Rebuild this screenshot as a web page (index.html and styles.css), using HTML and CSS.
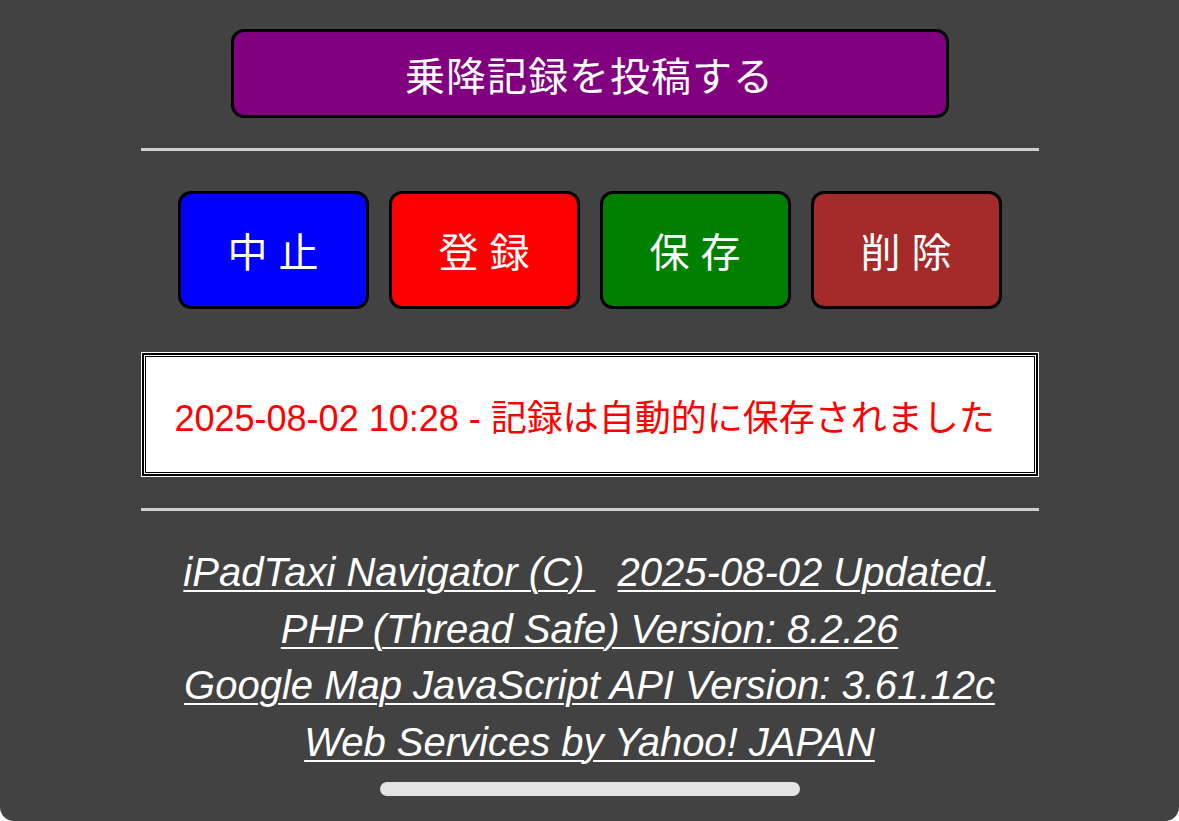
FILE: index.html
```html
<!DOCTYPE html>
<html lang="ja">
<head>
<meta charset="utf-8">
<title>乗降記録</title>
<link rel="stylesheet" href="styles.css">
</head>
<body>
<div class="screen">
  <button class="post">乗降記録を投稿する</button>
  <div class="rule"></div>
  <div class="actions">
    <button class="act cancel">中 止</button>
    <button class="act register">登 録</button>
    <button class="act save">保 存</button>
    <button class="act delete">削 除</button>
  </div>
  <div class="notice">
    <div class="notice-frame">
      <div class="notice-cell">2025-08-02 10:28 - 記録は自動的に保存されました</div>
    </div>
  </div>
  <div class="rule"></div>
  <div class="footer">
    <p><a href="#">iPadTaxi Navigator (C) </a>&nbsp; <a href="#">2025-08-02 Updated.</a></p>
    <p><a href="#">PHP (Thread Safe) Version: 8.2.26</a></p>
    <p><a href="#">Google Map JavaScript API Version: 3.61.12c</a></p>
    <p><a href="#">Web Services by Yahoo! JAPAN</a></p>
  </div>
  <div class="home-indicator"></div>
</div>
</body>
</html>
```

FILE: styles.css
```css
html, body {
  margin: 0;
  padding: 0;
  background: #ffffff;
}

body {
  font-family: "Liberation Sans", "Noto Sans CJK JP", sans-serif;
}

.screen {
  width: 1179px;
  height: 821px;
  box-sizing: border-box;
  background: #424242;
  border-radius: 0 0 14px 14px;
  padding-top: 29px;
  display: flex;
  flex-direction: column;
  align-items: center;
  overflow: hidden;
}

.post {
  width: 718px;
  height: 89px;
  box-sizing: border-box;
  background: #800080;
  border: 3px solid #000;
  border-radius: 13px;
  color: #fff;
  font-family: "Liberation Sans", "Noto Sans CJK JP", sans-serif;
  font-size: 40px;
  letter-spacing: 1px;
  padding: 0;
  margin: 0;
}

.rule {
  width: 898px;
  height: 3px;
  background: #cfcfcf;
  margin-top: 30px;
  flex-shrink: 0;
}

.actions {
  display: flex;
  gap: 20px;
  margin-top: 40px;
}

.act {
  width: 191px;
  height: 118px;
  box-sizing: border-box;
  border: 3px solid #000;
  border-radius: 13px;
  color: #fff;
  font-family: "Liberation Sans", "Noto Sans CJK JP", sans-serif;
  font-size: 40px;
  padding: 0;
  margin: 0;
}

.cancel { background: #0000ff; }
.register { background: #ff0000; }
.save { background: #008000; }
.delete { background: #a52a2a; }

.notice {
  margin-top: 43px;
  width: 898px;
  height: 125px;
  box-sizing: border-box;
  border: 1px solid #ffffff;
  display: flex;
}

.notice-frame {
  flex: 1;
  border: 2px solid #000;
  padding: 1px;
  background: #fff;
  display: flex;
}

.notice-cell {
  flex: 1;
  border: 1px solid #000;
  background: #fff;
  display: flex;
  align-items: center;
  padding-left: 29px;
  color: #ff0000;
  font-size: 36px;
  white-space: nowrap;
}

.notice + .rule {
  margin-top: 31px;
}

.footer {
  margin-top: 33px;
  text-align: center;
  font-size: 40px;
  line-height: 56.5px;
  font-style: italic;
}

.footer p {
  margin: 0;
  color: #fff;
}

.footer a {
  color: #fff;
  text-decoration: underline;
  text-decoration-thickness: 2px;
  text-underline-offset: 4px;
}

.home-indicator {
  margin-top: 12px;
  width: 420px;
  height: 14px;
  border-radius: 7px;
  background: #e4e4e4;
  flex-shrink: 0;
}
```
